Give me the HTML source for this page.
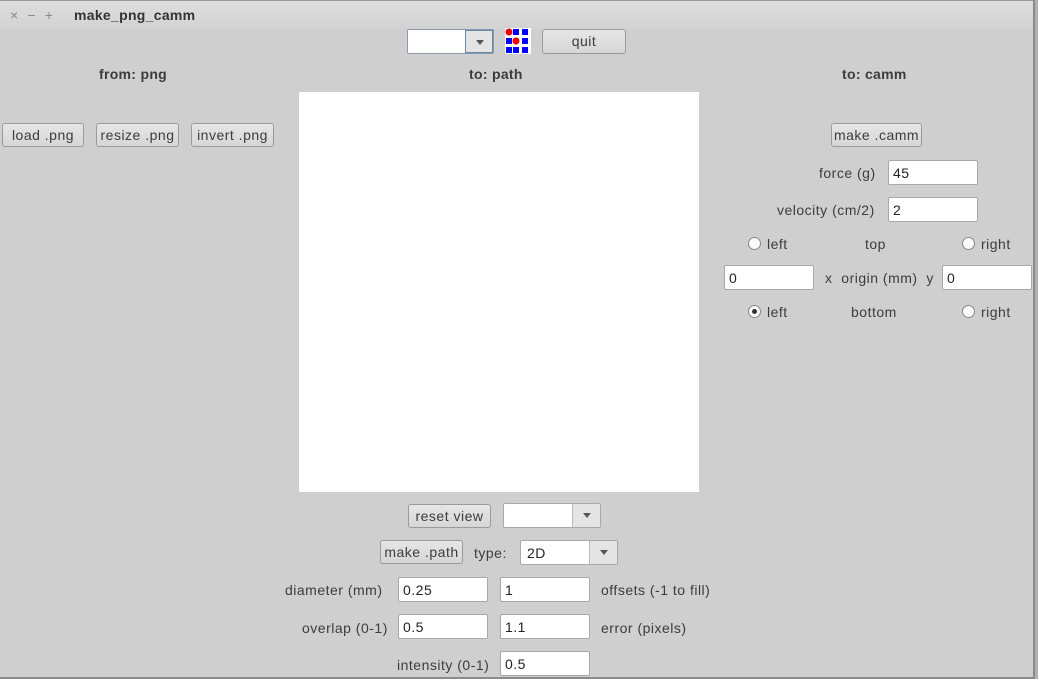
<!DOCTYPE html>
<html><head><meta charset="utf-8"><style>
*{box-sizing:border-box;margin:0;padding:0}
body{width:1038px;height:679px;background:#cfcfcf;font-family:"Liberation Sans",sans-serif;font-size:14px;letter-spacing:0.5px;color:#3c3c3c;position:relative;overflow:hidden}
.a{position:absolute;white-space:nowrap}
.t{margin-top:1px}
.btn{position:absolute;border:1px solid #9a9a9a;border-radius:3px;background:linear-gradient(#e6e6e6,#d6d6d6);text-align:center;line-height:23px;height:24px;color:#3c3c3c}
.inp{position:absolute;background:#fff;border:1px solid #a8a8a8;border-radius:2px;height:25px;line-height:24px;padding-left:4px;color:#222}
.cb{position:absolute;background:#fff;border:1px solid #a8a8a8;border-radius:2px;height:25px;line-height:24px;padding-left:6px;color:#222}
.cb .ar{position:absolute;right:0;top:0;width:28px;height:23px;border-left:1px solid #bbb;background:#e4e4e4}
.cb .ar:after{content:"";position:absolute;left:10px;top:9px;border-left:4px solid transparent;border-right:4px solid transparent;border-top:5px solid #555}
.b{font-weight:bold;letter-spacing:0.3px}
.rad{position:absolute;width:13px;height:13px;border:1px solid #888;border-radius:50%;background:#fafafa}
.rad.on:after{content:"";position:absolute;left:3px;top:3px;width:5px;height:5px;border-radius:50%;background:#333}
</style></head><body>
<div class="a" style="left:0;top:0;width:1038px;height:29px;background:linear-gradient(#dedede,#d2d2d2);border-top:1px solid #999"></div>
<div class="a" style="left:10px;top:7px;color:#888;font-size:14px">×&nbsp; −&nbsp; +</div>
<div class="a b" style="left:74px;top:7px;color:#333;font-size:14px">make_png_camm</div>
<div class="a" style="left:1033px;top:0;width:2px;height:679px;background:#8a8a8a"></div>
<div class="a" style="left:1035px;top:0;width:3px;height:679px;background:#b0b0b0"></div>
<div class="a" style="left:0;top:677px;width:1035px;height:2px;background:#8a8a8a"></div>

<div class="cb" style="left:407px;top:29px;width:87px;border-color:#8a9aae"><div class="ar" style="border:1px solid #6a86a8"></div></div>
<svg class="a" style="left:505px;top:28px" width="26" height="26" viewBox="0 0 26 26"><rect width="26" height="26" fill="#fff"/>
<g fill="#00f"><rect x="8" y="1" width="6" height="6"/><rect x="17" y="1" width="6" height="6"/><rect x="1" y="10" width="6" height="6"/><rect x="17" y="10" width="6" height="6"/><rect x="1" y="19" width="6" height="6"/><rect x="8" y="19" width="6" height="6"/><rect x="17" y="19" width="6" height="6"/></g>
<g fill="#e00"><circle cx="4" cy="4" r="3.5"/><circle cx="11" cy="13" r="3.5"/></g></svg>
<div class="btn" style="left:542px;top:29px;width:84px;height:25px">quit</div>

<div class="a b t" style="left:99px;top:65px">from: png</div>
<div class="a b t" style="left:469px;top:65px">to: path</div>
<div class="a b t" style="left:842px;top:65px">to: camm</div>

<div class="btn" style="left:2px;top:123px;width:82px">load .png</div>
<div class="btn" style="left:96px;top:123px;width:83px">resize .png</div>
<div class="btn" style="left:191px;top:123px;width:83px">invert .png</div>

<div class="a" style="left:299px;top:92px;width:400px;height:400px;background:#fff"></div>

<div class="btn" style="left:831px;top:123px;width:91px">make .camm</div>
<div class="a t" style="left:819px;top:164px">force (g)</div>
<div class="inp" style="left:888px;top:160px;width:90px">45</div>
<div class="a t" style="left:777px;top:201px">velocity (cm/2)</div>
<div class="inp" style="left:888px;top:197px;width:90px">2</div>

<div class="rad" style="left:748px;top:237px"></div><div class="a t" style="left:767px;top:235px">left</div>
<div class="a t" style="left:865px;top:235px">top</div>
<div class="rad" style="left:962px;top:237px"></div><div class="a t" style="left:981px;top:235px">right</div>

<div class="inp" style="left:724px;top:265px;width:90px">0</div>
<div class="a t" style="left:825px;top:269px">x&nbsp; origin (mm)&nbsp; y</div>
<div class="inp" style="left:942px;top:265px;width:90px">0</div>

<div class="rad on" style="left:748px;top:305px"></div><div class="a t" style="left:767px;top:303px">left</div>
<div class="a t" style="left:851px;top:303px">bottom</div>
<div class="rad" style="left:962px;top:305px"></div><div class="a t" style="left:981px;top:303px">right</div>

<div class="btn" style="left:408px;top:504px;width:83px">reset view</div>
<div class="cb" style="left:503px;top:503px;width:98px"><div class="ar"></div></div>

<div class="btn" style="left:380px;top:540px;width:83px">make .path</div>
<div class="a t" style="left:474px;top:544px">type:</div>
<div class="cb" style="left:520px;top:540px;width:98px">2D<div class="ar"></div></div>

<div class="a t" style="left:285px;top:581px">diameter (mm)</div>
<div class="inp" style="left:398px;top:577px;width:90px">0.25</div>
<div class="inp" style="left:500px;top:577px;width:90px">1</div>
<div class="a t" style="left:601px;top:581px">offsets (-1 to fill)</div>

<div class="a t" style="left:302px;top:619px">overlap (0-1)</div>
<div class="inp" style="left:398px;top:614px;width:90px">0.5</div>
<div class="inp" style="left:500px;top:614px;width:90px">1.1</div>
<div class="a t" style="left:601px;top:619px">error (pixels)</div>

<div class="a t" style="left:397px;top:656px">intensity (0-1)</div>
<div class="inp" style="left:500px;top:651px;width:90px">0.5</div>
</body></html>
